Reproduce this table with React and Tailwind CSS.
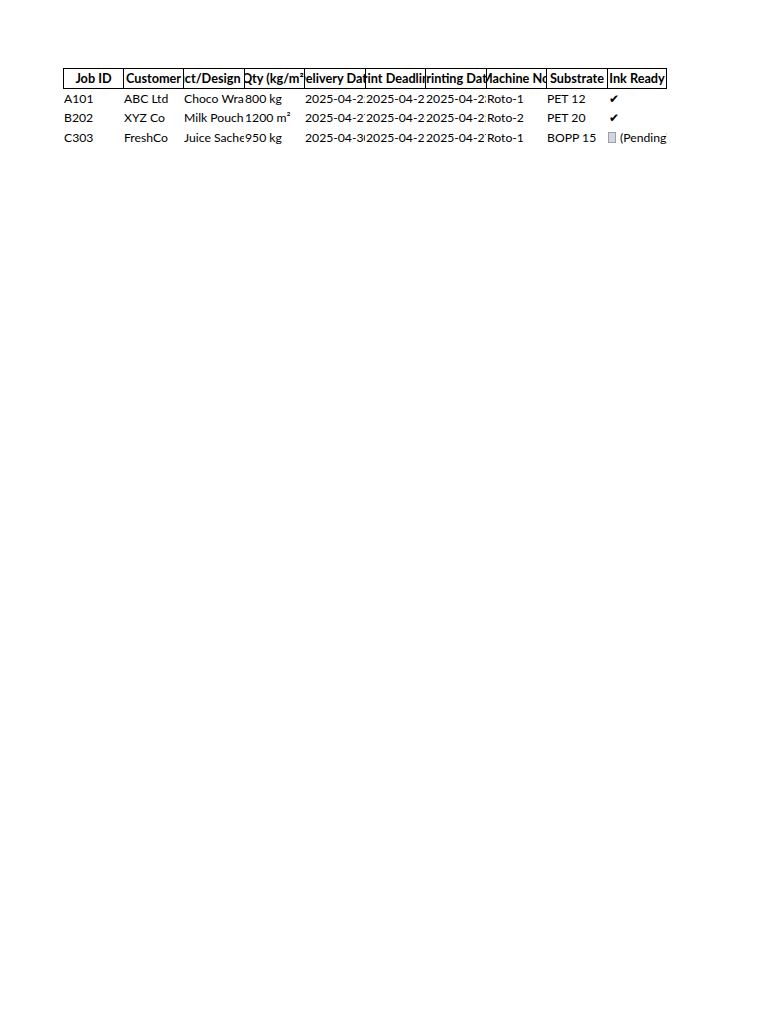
import React from "react";

const cols = [60, 60, 61, 60, 61, 60, 61, 60, 61, 60];

const headers = [
	"Job ID",
	"Customer",
	"Product/Design Name",
	"Qty (kg/m²)",
	"Delivery Date",
	"Print Deadline",
	"Printing Date",
	"Machine No.",
	"Substrate",
	"Ink Ready",
];

const rows = [
	["A101", "ABC Ltd", "Choco Wrapper", "800 kg", "2025-04-25", "2025-04-22", "2025-04-23", "Roto-1", "PET 12", "check"],
	["B202", "XYZ Co", "Milk Pouch", "1200 m²", "2025-04-27", "2025-04-24", "2025-04-25", "Roto-2", "PET 20", "check"],
	["C303", "FreshCo", "Juice Sachet", "950 kg", "2025-04-30", "2025-04-26", "2025-04-27", "Roto-1", "BOPP 15", "pending"],
];

const Cell = ({value}) => {
	if (value === "check") {
		return <span className="pl-[2px] font-['DejaVu_Sans',sans-serif] text-[12px]">✔</span>;
	}
	if (value === "pending") {
		return (
			<span className="flex items-center pl-[1px]">
				<span className="inline-block w-[8px] h-[11px] bg-gray-300 border border-gray-400 mr-[4px]"></span>
				(Pending)
			</span>
		);
	}
	return <span className="pl-[1px]">{value}</span>;
};

const App = () => {
	return (
		<div className="min-h-screen w-full bg-white pt-[68px] pl-[63px] text-black font-['Lato',sans-serif] text-[12.2px]">
			<div className="flex">
				{headers.map((h, i) => (
					<div
						key={h}
						style={{width: cols[i]}}
						className={
							"h-[21px] flex items-center justify-center overflow-hidden whitespace-nowrap font-bold text-[12.7px] border-t border-b border-l border-black" +
							(i === headers.length - 1 ? " border-r" : "")
						}
					>
						<span className="shrink-0">{h}</span>
					</div>
				))}
			</div>
			{rows.map(r => (
				<div key={r[0]} className="flex">
					{r.map((v, i) => (
						<div
							key={i}
							style={{width: cols[i]}}
							className="h-[19.5px] flex items-center overflow-hidden whitespace-nowrap"
						>
							<Cell value={v} />
						</div>
					))}
				</div>
			))}
		</div>
	);
};

export default App;
